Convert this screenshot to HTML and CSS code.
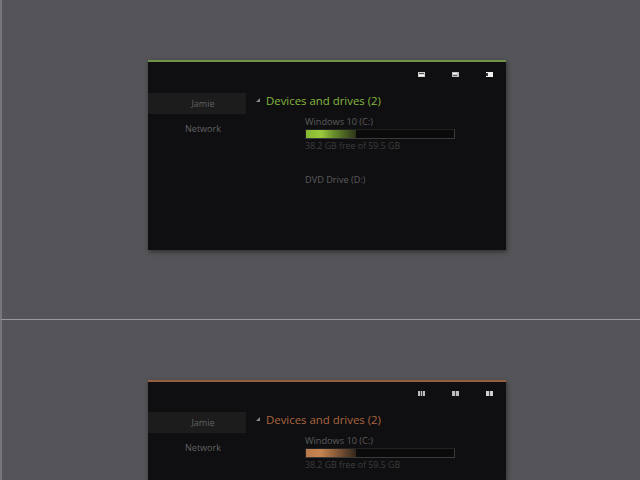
FILE: index.html
```html
<!DOCTYPE html>
<html lang="en">
<head>
    <meta charset="UTF-8">
    <title>Devices and drives</title>
    <link rel="stylesheet" href="styles.css">
</head>
<body>
    <section class="screen theme-green">
        <div class="explorer">
            <div class="title-bar">
                <svg class="caption-icon" viewBox="0 0 7 5"><rect width="7" height="5" fill="#cfcfcf"/><rect x="1" y="1" width="5" height="1" fill="#555"/><rect x="1" y="3" width="5" height="1" fill="#fff"/></svg>
                <svg class="caption-icon" viewBox="0 0 7 5"><rect width="7" height="5" fill="#bdbdbd"/><rect x="1" y="1" width="4" height="1" fill="#fff"/><rect x="1" y="3" width="4" height="1" fill="#666"/></svg>
                <svg class="caption-icon" viewBox="0 0 7 5"><rect width="7" height="5" fill="#efefef"/><rect x="0" y="1" width="2" height="3" fill="#333"/></svg>
            </div>
            <div class="explorer-body">
                <nav class="side-nav">
                    <div class="nav-item selected">Jamie</div>
                    <div class="nav-item">Network</div>
                </nav>
                <main class="drives">
                    <h2 class="group-title"><span class="group-arrow"></span>Devices and drives (2)</h2>
                    <div class="drive">
                        <div class="drive-name">Windows 10 (C:)</div>
                        <div class="usage-bar"><div class="usage-fill"></div></div>
                        <div class="drive-free">38.2 GB free of 59.5 GB</div>
                    </div>
                    <div class="drive drive-dvd">
                        <div class="drive-name">DVD Drive (D:)</div>
                    </div>
                </main>
            </div>
        </div>
    </section>

    <section class="screen theme-orange">
        <div class="explorer">
            <div class="title-bar">
                <svg class="caption-icon" viewBox="0 0 7 5"><rect width="7" height="5" fill="#bdbdbd"/><rect x="2" width="1" height="5" fill="#444"/><rect x="4" width="1" height="5" fill="#444"/></svg>
                <svg class="caption-icon" viewBox="0 0 7 5"><rect width="7" height="5" fill="#bdbdbd"/><rect x="3" width="1" height="5" fill="#444"/></svg>
                <svg class="caption-icon" viewBox="0 0 7 5"><rect width="7" height="5" fill="#cfcfcf"/><rect x="3" width="1" height="5" fill="#444"/></svg>
            </div>
            <div class="explorer-body">
                <nav class="side-nav">
                    <div class="nav-item selected">Jamie</div>
                    <div class="nav-item">Network</div>
                </nav>
                <main class="drives">
                    <h2 class="group-title"><span class="group-arrow"></span>Devices and drives (2)</h2>
                    <div class="drive">
                        <div class="drive-name">Windows 10 (C:)</div>
                        <div class="usage-bar"><div class="usage-fill"></div></div>
                        <div class="drive-free">38.2 GB free of 59.5 GB</div>
                    </div>
                </main>
            </div>
        </div>
    </section>
</body>
</html>
```

FILE: styles.css
```css
* {
    box-sizing: border-box;
    margin: 0;
    padding: 0;
}

html, body {
    width: 640px;
    height: 480px;
    overflow: hidden;
}

body {
    background-color: #555458;
    font-family: "Open Sans", "Liberation Sans", sans-serif;
}

.screen {
    height: 320px;
    padding: 60px 0 0 146px;
    border-left: 2px solid #77767a;
}

.theme-green {
    --accent: #86b83e;
    --accent-line: #6f9448;
    --fill: linear-gradient(90deg, #86b832 0%, #9acb3c 30%, #6a8f2c 55%, #2c3518 100%);
    border-bottom: 1px solid #9a999c;
}

.theme-orange {
    --accent: #ac6640;
    --accent-line: #95603f;
    --fill: linear-gradient(90deg, #bb7a4a 0%, #c58450 30%, #8a5c3a 60%, #33261c 100%);
    height: 160px;
}

.explorer {
    width: 358px;
    height: 190px;
    background-color: #0f0f11;
    border-top: 2px solid var(--accent-line);
    box-shadow: 1px 2px 5px rgba(0, 0, 0, 0.45);
}

.theme-orange .explorer {
    height: 100px;
    overflow: hidden;
}

.title-bar {
    display: flex;
    justify-content: flex-end;
    gap: 27px;
    height: 31px;
    padding: 10px 13px 0 0;
}

.theme-orange .title-bar {
    height: 30px;
    padding-top: 9px;
}

.caption-icon {
    width: 7px;
    height: 5px;
}

.explorer-body {
    display: flex;
}

.side-nav {
    width: 98px;
}

.nav-item {
    height: 21px;
    margin-bottom: 4px;
    padding: 3px 0 0 12px;
    text-align: center;
    font-size: 9px;
    line-height: 15px;
    color: #626262;
}

.nav-item.selected {
    background-color: #1c1c1d;
}

.drives {
    flex: 1;
    padding-left: 59px;
    margin-top: -2px;
}

.group-title {
    display: flex;
    align-items: center;
    margin-left: -41px;
    height: 18px;
    font-size: 11.4px;
    font-weight: 400;
    color: var(--accent);
}

.group-arrow {
    width: 0;
    height: 0;
    margin: 0 6px 0 -8px;
    border-left: 4px solid transparent;
    border-bottom: 4px solid #8a8a8a;
}

.drive {
    margin-top: 6px;
    width: 150px;
    font-size: 9.2px;
    line-height: 14px;
    color: #5c5c5c;
}

.usage-bar {
    height: 10px;
    border: 1px solid #3a3a3a;
    border-top-color: #222;
    border-left-color: #222;
    background-color: #0a0a0a;
}

.usage-fill {
    width: 34%;
    height: 100%;
    background: var(--fill);
}

.drive-free {
    font-size: 8.8px;
    color: #3d3d3d;
}

.drive-dvd {
    margin-top: 20px;
}
```
